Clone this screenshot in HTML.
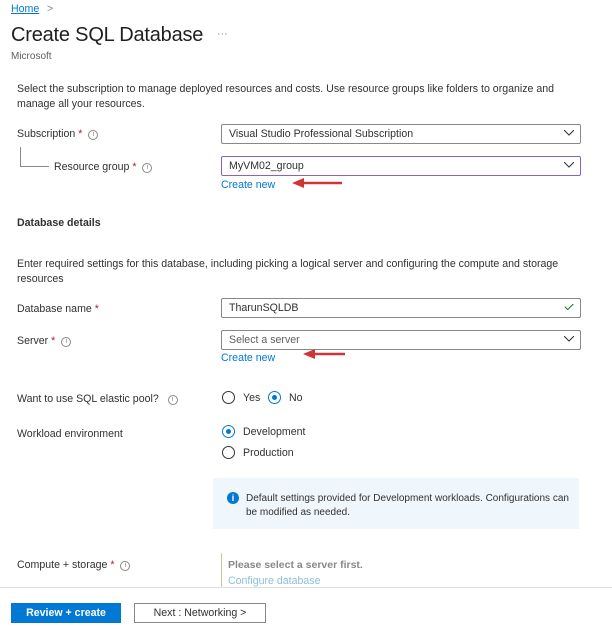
<!DOCTYPE html>
<html><head><style>
body{margin:0;width:612px;height:630px;background:#fff;font-family:"Liberation Sans",sans-serif;font-size:10.6px;color:#323130;position:relative;overflow:hidden}
.a{position:absolute;white-space:nowrap}
.dd{position:absolute;left:221px;width:358px;height:18px;border:1px solid #8a8886;border-radius:2px;box-sizing:content-box}
.dd span{position:absolute;left:7px;top:3px}
.chev{position:absolute;right:6px;top:5px;width:10px;height:6px}
.req{color:#a4262c}
.i{display:inline-block;width:8px;height:8px;border:1px solid #8a8886;border-radius:50%;font-size:7px;line-height:8px;text-align:center;color:#8a8886;margin-left:6px;vertical-align:1px}
.link{color:#0078d4}
.r{position:absolute;width:13px;height:13px;border:1px solid #323130;border-radius:50%;box-sizing:border-box}
.r.on{border-color:#0078d4}
.r.on::after{content:"";position:absolute;left:3px;top:3px;width:5px;height:5px;border-radius:50%;background:#0078d4}
</style></head><body>
<div class="a" style="left:11px;top:3px;color:#0078d4;text-decoration:underline">Home</div>
<div class="a" style="left:47px;top:3px;color:#8a8886">&gt;</div>
<div class="a" style="left:11px;top:24px;font-size:20px;letter-spacing:-0.2px;color:#201f1e">Create SQL Database</div>
<div class="a" style="left:217px;top:28px;color:#8a8886">···</div>
<div class="a" style="left:11px;top:51px;font-size:10px;color:#605e5c">Microsoft</div>
<div class="a" style="left:17px;top:82px;line-height:15px;white-space:normal;width:545px">Select the subscription to manage deployed resources and costs. Use resource groups like folders to organize and manage all your resources.</div>
<div class="a" style="left:17px;top:128px">Subscription <span class="req">*</span><span class="i">i</span></div>
<div class="dd" style="top:124px"><span>Visual Studio Professional Subscription</span><svg class="chev" viewBox="0 0 10 6"><path d="M0 0L5 5L10 0" fill="none" stroke="#323130"/></svg></div>
<div class="a" style="left:20px;top:147px;width:28px;height:19px;border-left:1px solid #8a8886;border-bottom:1px solid #8a8886"></div>
<div class="a" style="left:54px;top:161px">Resource group <span class="req">*</span><span class="i">i</span></div>
<div class="dd" style="top:156px;border-color:#8764b8"><span>MyVM02_group</span><svg class="chev" viewBox="0 0 10 6"><path d="M0 0L5 5L10 0" fill="none" stroke="#323130"/></svg></div>
<div class="a link" style="left:221px;top:179px">Create new</div>
<svg class="a" style="left:290px;top:177px" width="54" height="12"><path d="M12 6H52" stroke="#d13438" stroke-width="2.5"/><path d="M2 6L14 1V11Z" fill="#d13438"/></svg>
<div class="a" style="left:17px;top:217px;font-weight:bold">Database details</div>
<div class="a" style="left:17px;top:257px;line-height:15px;white-space:normal;width:560px">Enter required settings for this database, including picking a logical server and configuring the compute and storage resources</div>
<div class="a" style="left:17px;top:303px">Database name <span class="req">*</span></div>
<div class="dd" style="top:298px"><span>TharunSQLDB</span><svg class="chev" viewBox="0 0 10 7"><path d="M0 3L3.5 6.5L10 0" fill="none" stroke="#107c10" stroke-width="1.2"/></svg></div>
<div class="a" style="left:17px;top:335px">Server <span class="req">*</span><span class="i">i</span></div>
<div class="dd" style="top:330px"><span style="color:#605e5c">Select a server</span><svg class="chev" viewBox="0 0 10 6"><path d="M0 0L5 5L10 0" fill="none" stroke="#323130"/></svg></div>
<div class="a link" style="left:221px;top:352px">Create new</div>
<svg class="a" style="left:301px;top:348px" width="46" height="12"><path d="M12 6H44" stroke="#d13438" stroke-width="2.5"/><path d="M2 6L14 1V11Z" fill="#d13438"/></svg>
<div class="a" style="left:17px;top:393px">Want to use SQL elastic pool? <span class="i">i</span></div>
<div class="r" style="left:222px;top:391px"></div><div class="a" style="left:243px;top:392px">Yes</div>
<div class="r on" style="left:268px;top:391px"></div><div class="a" style="left:289px;top:392px">No</div>
<div class="a" style="left:17px;top:428px">Workload environment</div>
<div class="r on" style="left:222px;top:425px"></div><div class="a" style="left:243px;top:426px">Development</div>
<div class="r" style="left:222px;top:446px"></div><div class="a" style="left:243px;top:447px">Production</div>
<div class="a" style="left:213px;top:478px;width:366px;height:51px;background:#eff6fc"></div>
<div class="a" style="left:227px;top:492px;width:12px;height:12px;border-radius:50%;background:#0078d4;color:#fff;font-size:9px;font-weight:bold;text-align:center;line-height:12px">i</div>
<div class="a" style="left:246px;top:492px;font-size:10px;line-height:14px;white-space:normal;width:330px">Default settings provided for Development workloads. Configurations can be modified as needed.</div>
<div class="a" style="left:17px;top:559px">Compute + storage <span class="req">*</span><span class="i">i</span></div>
<div class="a" style="left:221px;top:553px;width:1px;height:34px;background:#c8c89a"></div>
<div class="a" style="left:228px;top:559px;color:#8a8886;font-weight:bold;font-size:10.5px">Please select a server first.</div>
<div class="a" style="left:228px;top:575px;color:#8cc0d8">Configure database</div>
<div class="a" style="left:0;top:587px;width:612px;height:43px;background:#fff;border-top:1px solid #e1dfdd"></div>
<div class="a" style="left:11px;top:603px;width:110px;height:20px;background:#0078d4;color:#fff;font-weight:bold;text-align:center;line-height:20px">Review + create</div>
<div class="a" style="left:134px;top:603px;width:130px;height:18px;border:1px solid #8a8886;text-align:center;line-height:18px;color:#323130">Next : Networking &gt;</div>
</body></html>
